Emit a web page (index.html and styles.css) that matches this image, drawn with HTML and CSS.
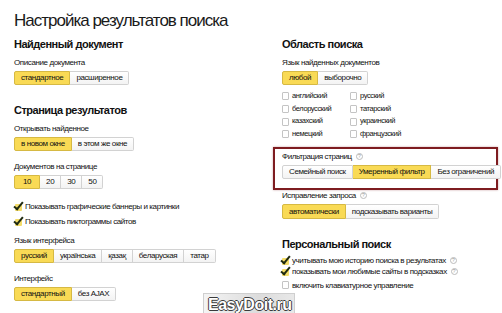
FILE: index.html
```html
<!DOCTYPE html>
<html lang="ru">
<head>
  <meta charset="UTF-8" />
  <title>Настройка результатов поиска</title>
  <link rel="stylesheet" href="styles.css">
</head>
<body>
  <div class="page">
    <h1>Настройка результатов поиска</h1>

    <div class="cols">
      <!-- left column -->
      <div class="col">
        <h2>Найденный документ</h2>
        <div class="label">Описание документа</div>
        <div class="seg">
          <span class="on">стандартное</span><span>расширенное</span>
        </div>

        <h2 class="gap">Страница результатов</h2>
        <div class="label">Открывать найденное</div>
        <div class="seg">
          <span class="on">в новом окне</span><span>в этом же окне</span>
        </div>

        <div class="label far">Документов на странице</div>
        <div class="seg nums">
          <span class="on">10</span><span>20</span><span>30</span><span>50</span>
        </div>

        <div class="checks">
          <div class="check"><i class="box on"></i>Показывать графические баннеры и картинки</div>
          <div class="check"><i class="box on"></i>Показывать пиктограммы сайтов</div>
        </div>

        <div class="label mid">Язык интерфейса</div>
        <div class="seg">
          <span class="on">русский</span><span>українська</span><span>қазақ</span><span>беларуская</span><span>татар</span>
        </div>

        <div class="label far">Интерфейс</div>
        <div class="seg">
          <span class="on">стандартный</span><span>без AJAX</span>
        </div>
      </div>

      <!-- right column -->
      <div class="col">
        <h2>Область поиска</h2>
        <div class="label">Язык найденных документов</div>
        <div class="seg">
          <span class="on">любой</span><span>выборочно</span>
        </div>

        <div class="langs">
          <div class="lang"><i class="box"></i>английский</div>
          <div class="lang"><i class="box"></i>русский</div>
          <div class="lang"><i class="box"></i>белорусский</div>
          <div class="lang"><i class="box"></i>татарский</div>
          <div class="lang"><i class="box"></i>казахский</div>
          <div class="lang"><i class="box"></i>украинский</div>
          <div class="lang"><i class="box"></i>немецкий</div>
          <div class="lang"><i class="box"></i>французский</div>
        </div>

        <div class="filter">
          <div class="label">Фильтрация страниц <b class="help">?</b></div>
          <div class="seg">
            <span>Семейный поиск</span><span class="on">Умеренный фильтр</span><span>Без ограничений</span>
          </div>
        </div>

        <div class="label flush">Исправление запроса <b class="help">?</b></div>
        <div class="seg tall">
          <span class="on">автоматически</span><span>подсказывать варианты</span>
        </div>

        <h2 class="gap">Персональный поиск</h2>
        <div class="personal">
          <div class="check"><i class="box on"></i>учитывать мою историю поиска в результатах <b class="help">?</b></div>
          <div class="check"><i class="box on"></i>показывать мои любимые сайты в подсказках <b class="help">?</b></div>
          <div class="check last"><i class="box"></i>включить клавиатурное управление</div>
        </div>
      </div>
    </div>

    <div class="watermark">EasyDoit.ru</div>
  </div>
</body>
</html>
```

FILE: styles.css
```css
body {
  margin: 0;
  background: #fff;
  color: #111;
  font-family: 'Liberation Sans', Arial, sans-serif;
  letter-spacing: -0.4px;
  overflow: hidden;
}

.page {
  position: relative;
  width: 502px;
  height: 313px;
  padding-left: 14px;
  box-sizing: border-box;
  overflow: hidden;
}

h1 {
  margin: 0;
  padding-top: 9px;
  font-size: 17px;
  line-height: 24px;
  font-weight: normal;
  letter-spacing: -1px;
  color: #1a1a1a;
}

.cols {
  display: grid;
  grid-template-columns: 268px 1fr;
}

h2 {
  margin: 4px 0 0;
  font-size: 11px;
  line-height: 15px;
  font-weight: bold;
  letter-spacing: -0.5px;
}

h2.gap {
  margin-top: 18px;
}

.label {
  margin-top: 5px;
  font-size: 8px;
  line-height: 11px;
  display: flex;
  align-items: center;
  gap: 4px;
}

.label.far {
  margin-top: 10px;
}

.label.mid {
  margin-top: 6px;
}

.label.flush {
  margin-top: 0;
}

.seg {
  display: flex;
  margin-top: 3px;
}

.seg span {
  font-size: 8px;
  line-height: 12px;
  padding: 0 6px;
  border: 1px solid #d2d2d2;
  border-left: none;
  background: linear-gradient(#fff, #f3f3f3);
  white-space: nowrap;
}

.seg span:first-child {
  border-left: 1px solid #d2d2d2;
  border-radius: 2px 0 0 2px;
}

.seg span:last-child {
  border-radius: 0 2px 2px 0;
}

.seg span.on {
  background: #f9da55;
  border-color: #d6b943;
}

.seg.tall span {
  line-height: 13px;
}

.nums span:first-child {
  padding: 0 8px;
}

.checks {
  margin-top: 10px;
}

.check {
  display: flex;
  align-items: center;
  font-size: 8px;
  line-height: 15px;
  white-space: nowrap;
}

.box {
  position: relative;
  display: inline-block;
  width: 5px;
  height: 6px;
  margin-right: 3px;
  border: 1px solid #c4c4c4;
  border-radius: 1px;
  background: #fff;
  flex-shrink: 0;
}

.box.on {
  width: 7px;
  height: 7px;
  border: none;
  background: #f3dc6a;
  margin: 2px 3px 0 0;
}

.box.on::after {
  content: "";
  position: absolute;
  left: 1px;
  top: -4px;
  width: 3px;
  height: 8px;
  border: solid #1f2a10;
  border-width: 0 2px 2px 0;
  transform: rotate(40deg);
}

.checks .box.on {
  margin: 2px 3px 0 1px;
}

.langs {
  display: grid;
  grid-template-columns: 68px 1fr;
  margin-top: 5px;
  font-size: 7.5px;
  line-height: 12.7px;
}

.lang {
  display: flex;
  align-items: center;
  white-space: nowrap;
}

.filter {
  margin: 6px 0 0 -9px;
  width: 207px;
  padding: 0 7px 9px;
  border: 2px solid #7e1c20;
  box-shadow: 0 0 2px rgba(126, 28, 32, 0.4);
}

.filter .label {
  margin-top: 2px;
}

.help {
  display: inline-block;
  width: 5px;
  height: 5px;
  border: 1px solid #bbb;
  border-radius: 50%;
  font-size: 5px;
  line-height: 5px;
  letter-spacing: 0;
  text-align: center;
  color: #999;
  font-weight: normal;
}

.personal {
  margin-top: 3px;
}

.personal .check {
  line-height: 11px;
}

.personal .check .help {
  margin-left: 4px;
}

.personal .check.last {
  margin-top: 3px;
}

.watermark {
  position: absolute;
  left: 203px;
  top: 293px;
  width: 86px;
  height: 18px;
  padding: 2px 0 0 4px;
  background: linear-gradient(90deg, #f4f4f4, #dcdcdc 60%, #e8e8e8);
  border: 1px solid #cfcfcf;
  border-bottom: none;
  font-size: 16px;
  line-height: 18px;
  font-weight: bold;
  letter-spacing: -0.5px;
  color: #fff;
  text-shadow: -1px 0 #3a3a3a, 1px 0 #3a3a3a, 0 -1px #3a3a3a, 0 1px #3a3a3a;
}
```
